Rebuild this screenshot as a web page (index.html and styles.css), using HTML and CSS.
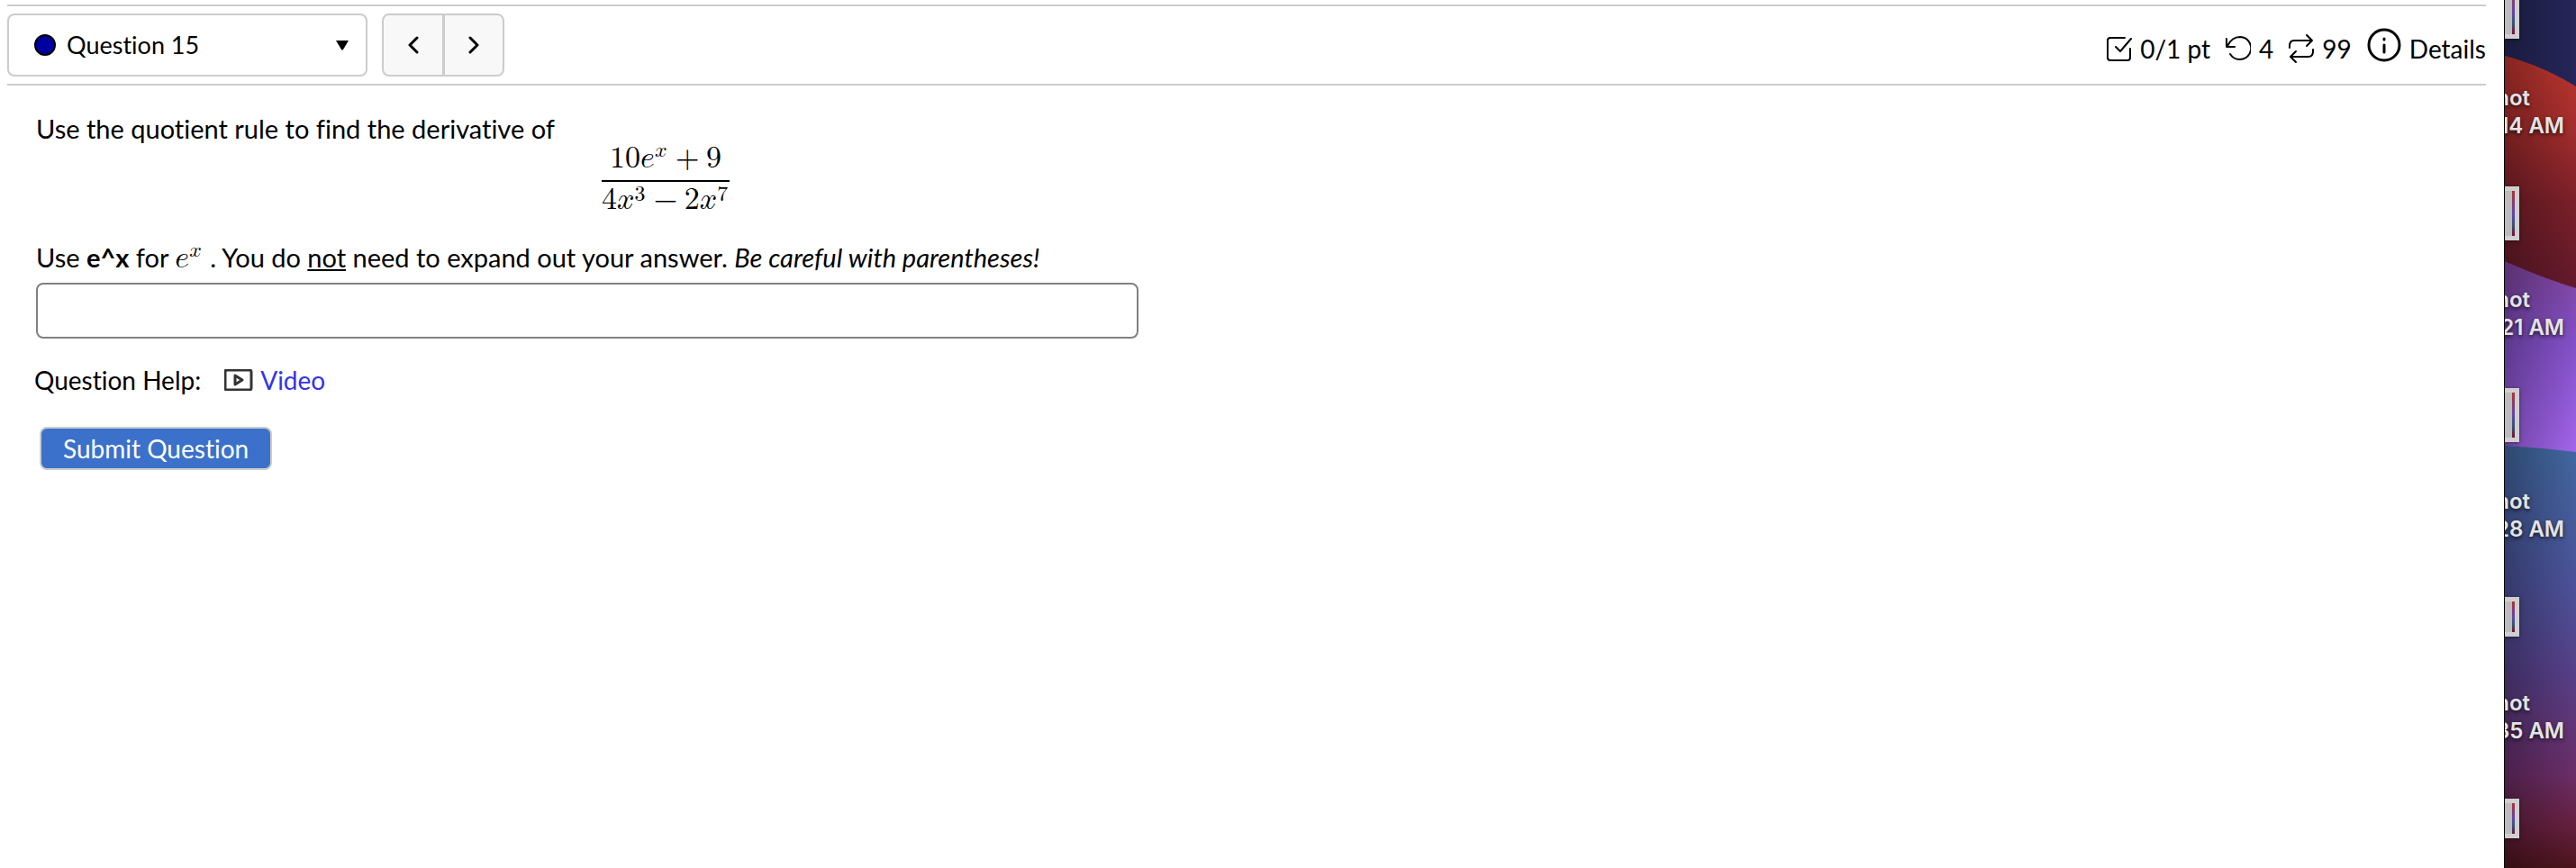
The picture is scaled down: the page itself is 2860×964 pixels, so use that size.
FILE: index.html
```html
<!DOCTYPE html>
<html lang="en">

<head>
    <meta charset="UTF-8">
    <meta name="viewport" content="width=device-width, initial-scale=1.0">
    <title>Question 15</title>
    <link rel="stylesheet" href="styles.css">
</head>

<body>

    <main class="window">
        <header class="question-bar">
            <div class="question-select">
                <svg class="dot" viewBox="0 0 24 24" aria-hidden="true">
                    <circle cx="12" cy="12" r="11" fill="#0000a0" stroke="#000" stroke-width="2" />
                </svg>
                <select id="question" name="question" aria-label="Question">
                    <option>Question 15</option>
                </select>
                <svg class="caret" viewBox="0 0 16 12" aria-hidden="true">
                    <path d="M1 1h14L9 11q-1 1-2 0z" />
                </svg>
            </div>

            <div class="pager">
                <button type="button" aria-label="Previous question">
                    <svg class="chevron" viewBox="0 0 12 20"><path d="M10 2L2 10l8 8" /></svg>
                </button>
                <button type="button" aria-label="Next question">
                    <svg class="chevron" viewBox="0 0 12 20"><path d="M2 2l8 8-8 8" /></svg>
                </button>
            </div>

            <div class="status">
                <span class="status-item">
                    <svg class="icon" viewBox="0 0 28 28">
                        <path d="M20 2H4Q1 2 1 5v19q0 3 3 3h19q3 0 3-3V14" />
                        <path d="M10 12l5 5L27 3" />
                    </svg>
                    0/1 pt
                </span>
                <span class="status-item">
                    <svg class="icon" viewBox="0 0 28 28">
                        <path d="M1 3v9h9" />
                        <path d="M2 11C6 3 12 1 16 1a12.500 12.500 0 1 1-11 19" />
                    </svg>
                    4
                </span>
                <span class="status-item">
                    <svg class="icon icon-tall" viewBox="0 0 28 34">
                        <path d="M20 2l6 6-6 6M26 8H6q-5 0-5 6v2" />
                        <path d="M8 20l-6 6 6 6M2 26h20q5 0 5-6v-2" />
                    </svg>
                    99
                </span>
                <span class="status-item">
                    <svg class="icon icon-info" viewBox="0 0 38 38">
                        <circle cx="19" cy="19" r="17" />
                        <path d="M19 19v8M19 12v1" />
                    </svg>
                    Details
                </span>
            </div>
        </header>

        <form class="question">
            <p class="prompt">Use the quotient rule to find the derivative of</p>
            <math class="fraction" displaystyle="true">
                <mfrac linethickness="2px">
                    <mrow>
                        <mn>10</mn><msup><mi>e</mi><mi>x</mi></msup><mo>+</mo><mn>9</mn>
                    </mrow>
                    <mrow>
                        <mn>4</mn><msup><mi>x</mi><mn>3</mn></msup><mo>−</mo><mn>2</mn><msup><mi>x</mi><mn>7</mn></msup>
                    </mrow>
                </mfrac>
            </math>

            <label class="hint" for="answer">Use <b>e^x</b> for <math><msup><mi>e</mi><mi>x</mi></msup></math> . You do <u>not</u> need to expand out your answer. <em>Be careful with parentheses!</em></label>
            <input type="text" id="answer" name="answer" class="answer" autocomplete="off">

            <p class="help">
                Question Help:
                <a href="#video">
                    <svg class="video-icon" viewBox="0 0 32 24">
                        <rect x="1" y="1" width="29" height="22" rx="2" />
                        <path d="M12 7v10l8-5z" />
                    </svg>
                    Video
                </a>
            </p>

            <button type="submit" class="submit">Submit Question</button>
        </form>
    </main>

    <aside class="desktop">
        <svg class="wallpaper" viewBox="0 0 79 964" preserveAspectRatio="none" aria-hidden="true">
            <defs>
                <linearGradient id="red" x1="0" y1="0" x2="0" y2="1">
                    <stop offset="0" stop-color="#c0362f" />
                    <stop offset="0.3" stop-color="#a52d2d" />
                    <stop offset="0.6" stop-color="#7c2029" />
                    <stop offset="1" stop-color="#60182c" />
                </linearGradient>
                <linearGradient id="purple" x1="0" y1="0" x2="0" y2="1">
                    <stop offset="0" stop-color="#80459d" />
                    <stop offset="0.4" stop-color="#8350c8" />
                    <stop offset="1" stop-color="#a566ef" />
                </linearGradient>
                <linearGradient id="blue" x1="0" y1="0" x2="0" y2="1">
                    <stop offset="0" stop-color="#4168a0" />
                    <stop offset="0.33" stop-color="#4c529a" />
                    <stop offset="0.55" stop-color="#573f88" />
                    <stop offset="0.78" stop-color="#6c2d68" />
                    <stop offset="0.9" stop-color="#66203f" />
                    <stop offset="1" stop-color="#4d141c" />
                </linearGradient>
                <linearGradient id="shade">
                    <stop offset="0" stop-color="#000" stop-opacity="0.3" />
                    <stop offset="1" stop-color="#000" stop-opacity="0" />
                </linearGradient>
            </defs>
            <rect width="79" height="964" fill="#252659" />
            <path d="M0 62Q42 73 79 96V330H0z" fill="url(#red)" />
            <path d="M0 290Q40 308 79 320V510H0z" fill="url(#purple)" />
            <path d="M0 495Q40 497 79 502V964H0z" fill="url(#blue)" />
            <rect width="79" height="964" fill="url(#shade)" />
        </svg>
        <ul class="files">
            <li class="file">
                <span class="thumb"></span>
                <span class="name">hot</span>
                <span class="time">14 AM</span>
            </li>
            <li class="file">
                <span class="thumb"></span>
                <span class="name">hot</span>
                <span class="time">21 AM</span>
            </li>
            <li class="file">
                <span class="thumb"></span>
                <span class="name">hot</span>
                <span class="time">28 AM</span>
            </li>
            <li class="file">
                <span class="thumb thumb-short"></span>
                <span class="name">hot</span>
                <span class="time">35 AM</span>
            </li>
            <li class="file">
                <span class="thumb thumb-short"></span>
            </li>
        </ul>
    </aside>

</body>

</html>
```
FILE: styles.css
```css
* {
    box-sizing: border-box;
}

body {
    margin: 0;
    display: flex;
    height: 100vh;
    overflow: hidden;
    background-color: #fff;
    color: #000;
    font-family: "Trebuchet MS", Lato, sans-serif;
    font-size: 28px;
    line-height: 36px;
    font-variant-ligatures: none;
}

button,
input,
select {
    font: inherit;
    font-variant-ligatures: none;
    color: inherit;
}

p {
    margin: 0;
}

.window {
    flex: 1;
    padding: 5px 20px 0 8px;
    border-right: 1px solid #000;
}

/* top bar */
.question-bar {
    display: flex;
    align-items: stretch;
    padding: 8px 0;
    border-top: 2px solid #ccc;
    border-bottom: 2px solid #ccc;
}

.question-select {
    display: flex;
    align-items: center;
    width: 400px;
    height: 70px;
    padding: 0 18px 0 28px;
    border: 2px solid #ccc;
    border-radius: 8px;
}

.question-select select {
    flex: 1;
    height: 66px;
    padding: 0 0 0 12px;
    border: none;
    background: none;
    appearance: none;
    font-size: 27px;
}

.dot {
    width: 24px;
    height: 24px;
}

.caret {
    width: 16px;
    height: 12px;
}

.pager {
    display: flex;
    margin-left: 16px;
}

.pager button {
    display: flex;
    align-items: center;
    justify-content: center;
    width: 69px;
    padding: 0;
    border: 2px solid #ccc;
    border-radius: 8px 0 0 8px;
    background-color: #f8f8f8;
}

.pager button + button {
    border-radius: 0 8px 8px 0;
    border-left-width: 1px;
    width: 67px;
}

.chevron {
    width: 12px;
    height: 20px;
    fill: none;
    stroke: #000;
    stroke-width: 3;
    stroke-linecap: round;
    stroke-linejoin: round;
}

.status {
    display: flex;
    align-items: center;
    gap: 17px;
    margin-left: auto;
    padding-top: 8px;
}

.status-item {
    display: flex;
    align-items: center;
    gap: 9px;
}

.icon {
    width: 28px;
    height: 28px;
    fill: none;
    stroke: #000;
    stroke-width: 2;
    stroke-linecap: round;
    stroke-linejoin: round;
}

.icon-tall {
    height: 34px;
}

.icon-info {
    width: 38px;
    height: 38px;
    margin-bottom: 8px;
    stroke-width: 3;
}

/* question body */
.question {
    display: flex;
    flex-direction: column;
    align-items: flex-start;
    padding: 30px 30px;
}

.prompt,
.hint {
    margin-left: 2px;
    font-size: 29px;
}

math {
    font-family: "Latin Modern Math", "Liberation Serif", serif;
    font-size: 34px;
    line-height: 0;
}

.fraction {
    margin: 2px 0 0 629px;
}

.hint {
    margin-top: 36px;
}

.answer {
    width: 100%;
    max-width: 1224px;
    height: 62px;
    margin: 10px 0 0 2px;
    padding: 0 12px;
    border: 2px solid #808080;
    border-radius: 8px;
}

.help {
    display: flex;
    gap: 26px;
    margin-top: 28px;
}

.help a {
    display: flex;
    align-items: center;
    gap: 8px;
    color: #3333e8;
    text-decoration: none;
}

.video-icon {
    width: 32px;
    height: 24px;
    fill: none;
    stroke: #333;
    stroke-width: 3;
    stroke-linejoin: round;
}

.submit {
    height: 48px;
    margin: 34px 0 0 6px;
    padding: 0 24px;
    border: 2px solid #ccc;
    border-radius: 8px;
    background-color: #3b71ca;
    color: #fff;
}

/* strip of desktop behind the window */
.desktop {
    position: relative;
    width: 79px;
    overflow: hidden;
}

.wallpaper {
    position: absolute;
    width: 100%;
    height: 100%;
}

.files {
    position: relative;
    margin: -17px 0 0;
    padding: 0;
    list-style: none;
    color: #e4e4e4;
    font-family: Inter, sans-serif;
    font-size: 24px;
    font-weight: 600;
    line-height: 31px;
    text-shadow: 0 2px 4px rgba(0, 0, 0, 0.7);
}

.file {
    display: flex;
    flex-direction: column;
    align-items: flex-end;
    height: 224px;
    white-space: nowrap;
}

.thumb {
    width: 80px;
    height: 60px;
    margin: 0 63px 50px 0;
    border: 5px solid #cfcfcf;
    background: linear-gradient(to bottom, #a33, #64a 50%, #357 75%, #713) right / 3px 100% no-repeat #bbb;
    box-shadow: 0 1px 4px rgba(0, 0, 0, 0.5);
}

.thumb-short {
    height: 44px;
    margin-top: 8px;
    margin-bottom: 58px;
}

.name {
    margin-right: 51px;
}

.time {
    margin-right: 13px;
}
```
